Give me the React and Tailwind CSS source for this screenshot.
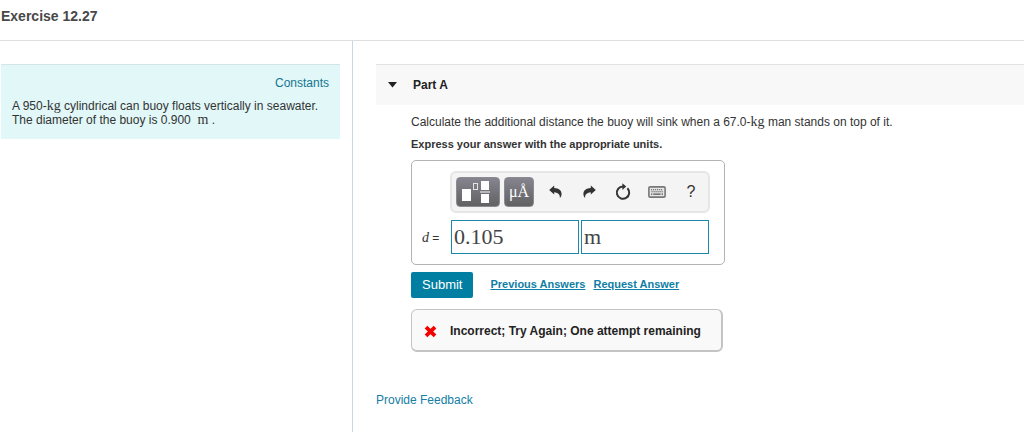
import React, { useState } from "react";

const serif = "font-['Liberation_Serif',serif]";
const toolButton = "flex h-7 w-[34px] items-center justify-center text-[#333]";
const darkButton =
  "flex h-[30px] items-center justify-center rounded-[4px] border border-[#8b8b92] bg-linear-to-b from-[#86848f] to-[#626262] text-white";

function Unit({ children }) {
  return <span className="font-['Liberation_Serif',serif] text-sm leading-none">{children}</span>;
}

function TemplateIcon() {
  return (
    <svg width="28" height="22" viewBox="0 0 28 22" fill="#fff" aria-hidden="true">
      <rect x="0" y="8" width="9" height="12" />
      <rect x="11.5" y="2.5" width="4" height="6" fill="none" stroke="#e4e4e4" />
      <rect x="19" y="0" width="8" height="9" />
      <rect x="18" y="10.5" width="10" height="1" />
      <rect x="19" y="13" width="8" height="9" />
    </svg>
  );
}

function ArrowIcon({ flip }) {
  return (
    <svg width="13" height="14" viewBox="0 0 13 14" className={flip ? "-scale-x-100" : ""} aria-hidden="true">
      <path
        d="M0.2 5 L5.2 0.6 V3 C9.8 3.2 12.6 5.6 12.6 8.8 C12.6 10.6 12 12 10.8 13 C11.3 9.9 9.6 7.6 5.2 7.2 V9.6 Z"
        fill="#333"
      />
    </svg>
  );
}

function ResetIcon() {
  return (
    <svg width="16" height="18" viewBox="0 0 16 18" aria-hidden="true">
      <path d="M12.4 5.2 A6.2 6.2 0 1 1 8 3.4" fill="none" stroke="#333" strokeWidth="2" />
      <path d="M7.4 0.2 L11.2 3.6 L7.4 7 Z" fill="#333" />
    </svg>
  );
}

function KeyboardIcon() {
  return (
    <svg width="18" height="12" viewBox="0 0 18 12" aria-hidden="true">
      <rect x="0.9" y="0.9" width="16.2" height="10.2" rx="1.2" fill="#e6e6e6" stroke="#777" strokeWidth="1.6" />
      <path d="M3 3.8 H15 M3.5 5.8 H15" stroke="#555" strokeWidth="1.1" strokeDasharray="1.2 0.8" />
      <path d="M3 8.2 H4.3 M5.2 8.2 H12.6 M13.6 8.2 H15" stroke="#555" strokeWidth="1.2" />
    </svg>
  );
}

function Toolbar() {
  return (
    <div role="toolbar" className="flex h-[42px] items-center rounded-md border-2 border-[#e6e6e6] bg-[#f4f4f4] pl-1">
      <button type="button" aria-label="Templates" className={`${darkButton} w-11 pr-1`}>
        <TemplateIcon />
      </button>
      <button type="button" aria-label="Symbols" className={`${darkButton} ${serif} ml-1 w-[30px] text-base`}>
        μÅ
      </button>
      <div className="ml-1 flex">
        <button type="button" aria-label="Undo" className={toolButton}>
          <ArrowIcon />
        </button>
        <button type="button" aria-label="Redo" className={toolButton}>
          <ArrowIcon flip />
        </button>
        <button type="button" aria-label="Reset" className={toolButton}>
          <ResetIcon />
        </button>
        <button type="button" aria-label="Keyboard shortcuts" className={toolButton}>
          <KeyboardIcon />
        </button>
        <button type="button" aria-label="Help" className={`${toolButton} text-base`}>
          ?
        </button>
      </div>
    </div>
  );
}

function AnswerField({ label, id, initial }) {
  const [value, setValue] = useState(initial);
  return (
    <input
      id={id}
      aria-label={label}
      value={value}
      onChange={(e) => setValue(e.target.value)}
      className="h-[34px] w-32 min-w-0 border border-[#1c86ab] bg-white px-0.5 font-['Liberation_Serif',serif] text-[22px] text-[#444] outline-none"
    />
  );
}

export default function App() {
  const [open, setOpen] = useState(true);
  return (
    <div className="flex min-h-screen flex-col bg-white font-['Liberation_Sans',Arial,sans-serif] text-xs text-[#333]">
      <header className="flex h-[41px] items-start border-b border-[#dedede] px-px pt-1.5">
        <h1 className="text-sm leading-5 font-bold text-[#484848]">Exercise 12.27</h1>
      </header>

      <div className="flex grow">
        <aside className="w-[353px] shrink-0 border-r border-[#c6d8e8] pt-[23px] pr-3 pl-px">
          <section className="border-t border-[#d5e5e7] bg-[#e1f7f8] px-[11px] pt-2.5 pb-3">
            <div className="text-right leading-4">
              <a href="#constants" className="text-[#147590]">Constants</a>
            </div>
            <p className="mt-2 leading-[14px]">
              A 950-<Unit>kg</Unit> cylindrical can buoy floats vertically in seawater.
              <br />
              The diameter of the buoy is 0.900 &nbsp;<Unit>m</Unit> .
            </p>
          </section>
        </aside>

        <main className="min-w-0 grow pt-[23px] pl-[23px]">
          <button
            type="button"
            aria-expanded={open}
            onClick={() => setOpen(!open)}
            className="flex h-[41px] w-full items-center border-t border-[#e2e2e2] bg-[#f8f8f8] pl-3 font-bold text-[#222]"
          >
            <svg width="9" height="6" viewBox="0 0 9 6" aria-hidden="true">
              <path d="M0 0 H9 L4.5 5.5 Z" fill="#222" />
            </svg>
            <span className="ml-4">Part A</span>
          </button>

          {open && (
            <div className="pt-2 pl-[35px]">
              <p className="leading-[18px]">
                Calculate the additional distance the buoy will sink when a 67.0-<Unit>kg</Unit> man stands on top of it.
              </p>
              <p className="mt-1 text-[11px] leading-[18px] font-bold">Express your answer with the appropriate units.</p>

              <form onSubmit={(e) => e.preventDefault()}>
                <div className="mt-[7px] flex w-[314px] items-end rounded-[5px] border border-[#b3b3b3] py-2.5 pr-3.5 pl-2.5">
                  <label htmlFor="value" className="w-7 pb-2 leading-4">
                    <span className={`${serif} text-sm leading-4 italic`}>d</span> =
                  </label>
                  <div className="grow">
                    <Toolbar />
                    <div className="mt-[7px] flex gap-0.5 px-px">
                      <AnswerField label="Value of d" id="value" initial="0.105" />
                      <AnswerField label="Units" id="units" initial="m" />
                    </div>
                  </div>
                </div>

                <div className="mt-[7px] flex items-start text-[11px] font-bold text-[#0f7ea5]">
                  <button type="submit" className="h-[26px] rounded-xs bg-[#007fa3] px-[11px] text-[13px] font-normal text-white">
                    Submit
                  </button>
                  <a href="#previous" className="ml-[17px] leading-6 underline">Previous Answers</a>
                  <a href="#request" className="ml-2 leading-6 underline">Request Answer</a>
                </div>
              </form>

              <div
                role="status"
                className="mt-[11px] flex h-[43px] w-[312px] items-center rounded-md border border-r-2 border-b-2 border-[#c4c4c4] bg-[#f9f9f9] pt-0.5 pl-3 font-bold text-[#222]"
              >
                <svg width="13" height="13" viewBox="0 0 13 13" aria-hidden="true">
                  <path d="M2 2.2 L11 10.8 M11 2.2 L2 10.8" stroke="#f50000" strokeWidth="3.8" />
                </svg>
                <span className="ml-[13px]">Incorrect; Try Again; One attempt remaining</span>
              </div>
            </div>
          )}

          <div className="mt-[38px] leading-5">
            <a href="#feedback" className="text-[#147ea3]">Provide Feedback</a>
          </div>
        </main>
      </div>
    </div>
  );
}
